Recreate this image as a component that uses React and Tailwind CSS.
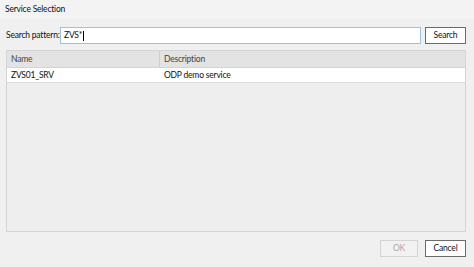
import React from 'react';

const App = () => {
    return (
        <div
            className="w-[474px] h-[267px] bg-[#f0f0f0] flex flex-col text-[8.5px] tracking-[-0.2px] text-[#111] overflow-hidden"
            style={{ fontFamily: 'Lato, "Noto Sans", sans-serif' }}
        >
            {/* Title */}
            <div className="h-[19px] pl-[5px] flex items-center bg-[#f3f3f3]">
                <span>Service Selection</span>
            </div>

            {/* Search row */}
            <div className="mt-[8px] pl-[6px] pr-[8px] flex items-center">
                <span className="w-[54px] shrink-0 whitespace-nowrap">Search pattern:</span>
                <div className="flex-1 h-[17px] bg-white border border-[#9fc2e4] flex items-center px-[3px]">
                    <span>ZVS*</span>
                    <span className="w-px h-[10px] bg-black ml-px" />
                </div>
                <button className="ml-[4px] w-[41px] h-[17px] shrink-0 bg-white border border-[#6b6b6b] flex items-center justify-center">
                    Search
                </button>
            </div>

            {/* Result table */}
            <div className="mt-[6px] ml-[6px] mr-[8px] h-[182px] border border-[#d4d4d4] bg-[#eeeeee] flex flex-col">
                <div className="h-[17px] bg-[#e3e3e3] border-b border-[#d4d4d4] grid grid-cols-[153px_1fr]">
                    <div className="border-r border-[#cfcfcf] pl-[4px] flex items-center text-[#444]">Name</div>
                    <div className="pl-[4px] flex items-center text-[#444]">Description</div>
                </div>
                <div className="h-[15px] bg-white border-b border-[#dcdcdc] grid grid-cols-[153px_1fr]">
                    <div className="pl-[4px] flex items-center">ZVS01_SRV</div>
                    <div className="pl-[4px] flex items-center">ODP demo service</div>
                </div>
            </div>

            {/* Footer buttons */}
            <div className="mt-[8px] pr-[8px] flex justify-end gap-[7px]">
                <button disabled className="w-[38px] h-[17px] bg-[#f2f2f2] border border-[#d5d5d5] text-[#a8a8a8] flex items-center justify-center">
                    OK
                </button>
                <button className="w-[41px] h-[17px] bg-white border border-[#6b6b6b] flex items-center justify-center">
                    Cancel
                </button>
            </div>
        </div>
    );
};

export default App;
